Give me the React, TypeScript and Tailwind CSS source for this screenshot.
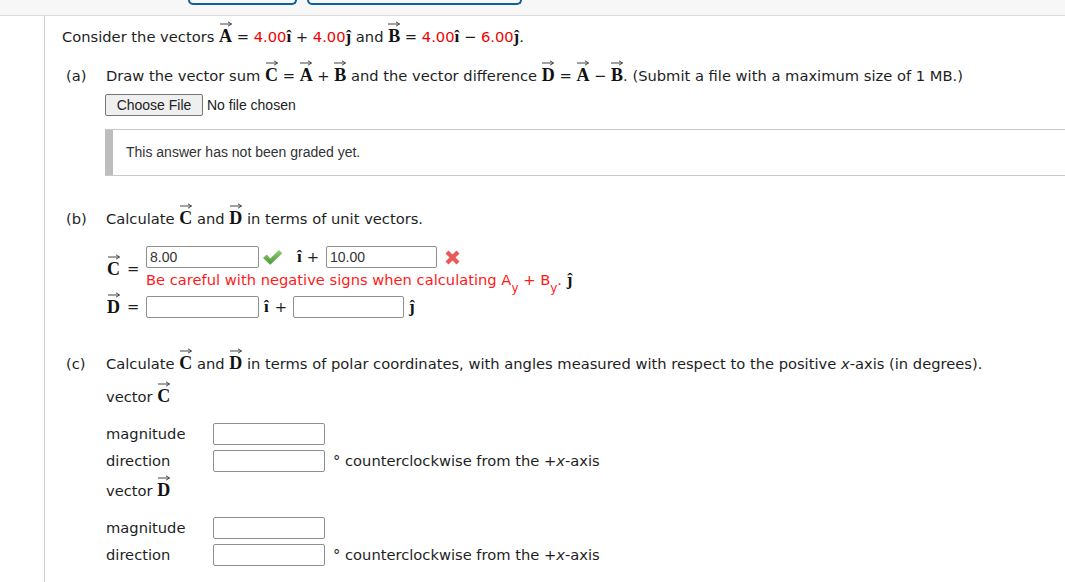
import React from "react";

const Arrow = () => (
  <svg
    className="absolute left-1/2 -translate-x-1/2 top-[-6px]"
    width="13"
    height="6"
    viewBox="0 0 13 6"
  >
    <path d="M0.5 3 H12" stroke="#444" strokeWidth="1" fill="none" />
    <path d="M8.5 0.8 L12 3 L8.5 5.2" stroke="#444" strokeWidth="1" fill="none" />
  </svg>
);

const Vec = ({ l }: { l: string }) => (
  <span className="relative inline-block font-['Liberation_Serif',serif] font-bold text-[18px] leading-none text-[#111]">
    {l}
    <Arrow />
  </span>
);

const Hat = ({ c }: { c: string }) => (
  <span className="font-['Liberation_Serif',serif] font-bold text-[17px] leading-none text-[#111]">{c}</span>
);

const Red = ({ children }: { children: React.ReactNode }) => (
  <span className="text-[#ee0000]">{children}</span>
);

const Input = ({ value = "", w = "w-[112px]" }: { value?: string; w?: string }) => (
  <div
    className={`${w} h-[22px] border border-[#8f8f8f] rounded-[2px] bg-white flex items-center pl-[3px] font-['Liberation_Sans',Arial,sans-serif] text-[14px] text-[#333] shrink-0`}
  >
    {value}
  </div>
);

const Check = () => (
  <svg width="21" height="17" viewBox="0 0 21 17" className="shrink-0">
    <defs>
      <linearGradient id="g" x1="0" y1="0" x2="0" y2="1">
        <stop offset="0" stopColor="#93cf72" />
        <stop offset="1" stopColor="#4a963a" />
      </linearGradient>
    </defs>
    <path d="M1 9 L4.8 5.6 L8.2 9.4 L17 1 L20.3 4.3 L8.2 15.8 Z" fill="url(#g)" />
  </svg>
);

const Cross = () => (
  <svg width="17" height="17" viewBox="0 0 17 17" className="shrink-0">
    <path
      d="M1.5 4.5 L4.5 1.5 L8.5 5.5 L12.5 1.5 L15.5 4.5 L11.5 8.5 L15.5 12.5 L12.5 15.5 L8.5 11.5 L4.5 15.5 L1.5 12.5 L5.5 8.5 Z"
      fill="#ea5858"
    />
  </svg>
);

export default function App() {
  return (
    <div className="w-[1065px] h-[582px] overflow-hidden bg-white font-['DejaVu_Sans',Verdana,sans-serif] text-[14.7px] text-[#1e1e1e]">
      {/* top bar */}
      <div className="h-[16px] bg-[#f7f7f7] border-b border-[#dcdcdc] flex items-start pl-[188px] gap-[10px]">
        <div className="w-[109px] h-[5px] border-2 border-t-0 border-[#0f5f98] rounded-b-[5px]" />
        <div className="w-[215px] h-[5px] border-2 border-t-0 border-[#0f5f98] rounded-b-[5px]" />
      </div>

      <div className="flex h-[566px]">
        <div className="w-[45px] shrink-0 border-r border-[#cfcfcf]" />
        <div className="flex-1 pl-[17px]">
          {/* intro */}
          <div className="mt-[11px] h-[20px] leading-[20px] whitespace-nowrap">
            Consider the vectors <Vec l="A" /> = <Red>4.00</Red>
            <Hat c="î" /> + <Red>4.00</Red>
            <Hat c="ĵ" /> and <Vec l="B" /> = <Red>4.00</Red>
            <Hat c="î" /> − <Red>6.00</Red>
            <Hat c="ĵ" />.
          </div>

          {/* (a) */}
          <div className="mt-[19px] flex h-[20px] leading-[20px] whitespace-nowrap">
            <div className="w-[44px] pl-[4px] shrink-0">(a)</div>
            <div>
              Draw the vector sum <Vec l="C" /> = <Vec l="A" /> + <Vec l="B" /> and the vector difference{" "}
              <Vec l="D" /> = <Vec l="A" /> − <Vec l="B" />. (Submit a file with a maximum size of 1 MB.)
            </div>
          </div>
          <div className="mt-[8px] ml-[43px] flex items-center font-['Liberation_Sans',Arial,sans-serif] text-[14px] text-[#222]">
            <div className="w-[98px] h-[22px] border border-[#767676] rounded-[2px] bg-[#efefef] flex items-center justify-center">
              Choose File
            </div>
            <span className="ml-[4px]">No file chosen</span>
          </div>
          <div className="mt-[13px] ml-[43px] h-[47px] border-y border-[#c8c8c8] flex">
            <div className="w-[8px] bg-[#bdbdbd] shrink-0" />
            <div className="pl-[13px] flex items-center font-['Liberation_Sans',Arial,sans-serif] text-[14px] text-[#333]">
              This answer has not been graded yet.
            </div>
          </div>

          {/* (b) */}
          <div className="mt-[33px] flex h-[20px] leading-[20px] whitespace-nowrap">
            <div className="w-[44px] pl-[4px] shrink-0">(b)</div>
            <div>
              Calculate <Vec l="C" /> and <Vec l="D" /> in terms of unit vectors.
            </div>
          </div>

          <div className="mt-[17px] ml-[45px] flex">
            <div className="w-[39px] flex items-center">
              <Vec l="C" />
              <span className="ml-[7px]">=</span>
            </div>
            <div>
              <div className="flex items-center h-[22px]">
                <Input value="8.00" w="w-[113px]" />
                <span className="ml-[3px] flex">
                  <Check />
                </span>
                <span className="ml-[14px]">
                  <Hat c="î" />
                </span>
                <span className="ml-[5px]">+</span>
                <span className="ml-[7px]">
                  <Input value="10.00" w="w-[111px]" />
                </span>
                <span className="ml-[7px] flex">
                  <Cross />
                </span>
              </div>
              <div className="h-[24px] leading-[24px] whitespace-nowrap">
                <span className="text-[#ff1a1a]">
                  Be careful with negative signs when calculating A
                  <sub className="text-[12px] align-[-4px]">y</sub> + B
                  <sub className="text-[12px] align-[-4px]">y</sub>.
                </span>{" "}
                <Hat c="ĵ" />
              </div>
            </div>
          </div>
          <div className="mt-[4px] ml-[45px] flex items-center h-[22px]">
            <div className="w-[39px] flex items-center">
              <Vec l="D" />
              <span className="ml-[7px]">=</span>
            </div>
            <Input w="w-[113px]" />
            <span className="ml-[5px]">
              <Hat c="î" />
            </span>
            <span className="ml-[6px]">+</span>
            <span className="ml-[6px]">
              <Input w="w-[111px]" />
            </span>
            <span className="ml-[5px]">
              <Hat c="ĵ" />
            </span>
          </div>

          {/* (c) */}
          <div className="mt-[36px] flex h-[20px] leading-[20px] whitespace-nowrap">
            <div className="w-[44px] pl-[4px] shrink-0">(c)</div>
            <div>
              Calculate <Vec l="C" /> and <Vec l="D" /> in terms of polar coordinates, with angles measured with
              respect to the positive <i>x</i>-axis (in degrees).
            </div>
          </div>

          <div className="ml-[44px]">
            <div className="mt-[13px] h-[20px] leading-[20px]">
              vector <Vec l="C" />
            </div>
            <div className="mt-[16px] flex items-center h-[22px]">
              <div className="w-[107px]">magnitude</div>
              <Input />
            </div>
            <div className="mt-[5px] flex items-center h-[22px]">
              <div className="w-[107px]">direction</div>
              <Input />
              <span className="ml-[8px] whitespace-nowrap">
                ° counterclockwise from the +<i>x</i>-axis
              </span>
            </div>

            <div className="mt-[9px] h-[20px] leading-[20px]">
              vector <Vec l="D" />
            </div>
            <div className="mt-[16px] flex items-center h-[22px]">
              <div className="w-[107px]">magnitude</div>
              <Input />
            </div>
            <div className="mt-[5px] flex items-center h-[22px]">
              <div className="w-[107px]">direction</div>
              <Input />
              <span className="ml-[8px] whitespace-nowrap">
                ° counterclockwise from the +<i>x</i>-axis
              </span>
            </div>
          </div>
        </div>
      </div>
    </div>
  );
}
